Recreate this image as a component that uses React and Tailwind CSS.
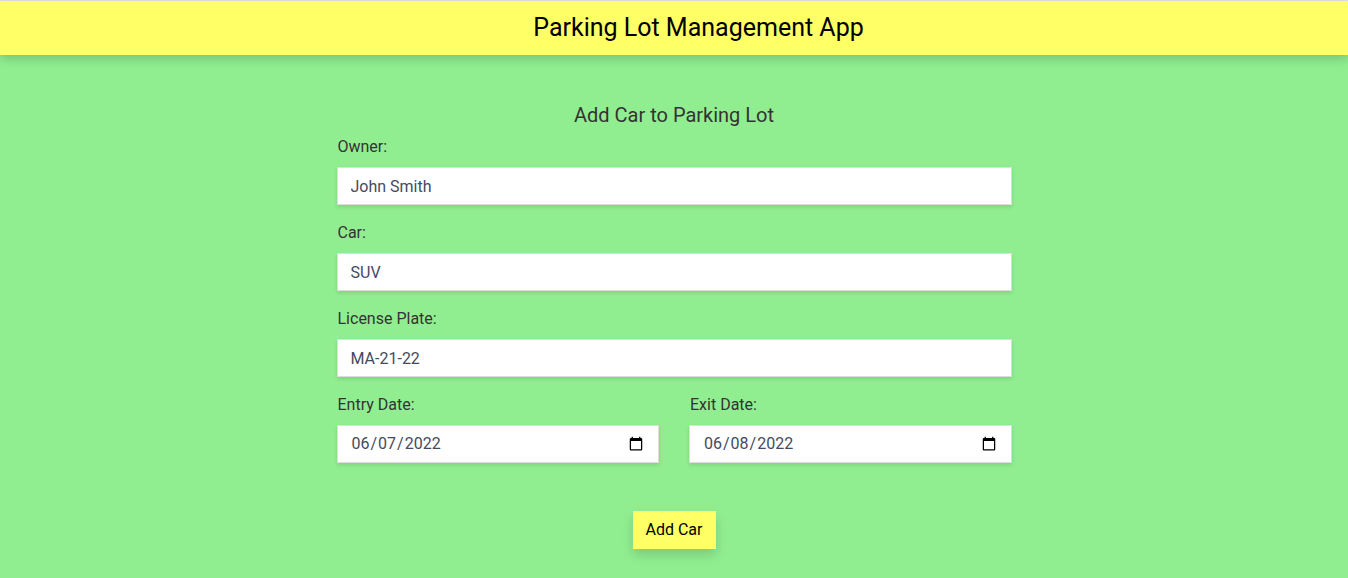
import React from "react";

function Field({ label, value, type = "text", className = "" }) {
  return (
    <div className={"flex flex-col " + className}>
      <label className="pl-[1px] text-[16px] leading-[19px] text-[#333]">{label}</label>
      <input
        type={type}
        defaultValue={value}
        className="mt-[11px] h-[38px] w-full bg-white border border-[#ddd] pl-[13px] pr-[12px] text-[16px] leading-[18px] text-[#444a5e] outline-none shadow-[0_2px_4px_rgba(0,0,0,0.12)]"
        style={{ fontFamily: "Roboto, sans-serif" }}
      />
    </div>
  );
}

export default function App() {
  return (
    <div className="min-h-[578px] bg-[#90ee90] border-t border-[#e0e0e0]" style={{ fontFamily: "Roboto, 'Noto Sans', sans-serif" }}>
      <header className="h-[54px] pl-[49px] bg-[#ffff66] flex items-center justify-center shadow-[0_4px_10px_rgba(0,0,0,0.18)] relative z-10">
        <h1 className="text-[25px] text-black">Parking Lot Management App</h1>
      </header>
      <main className="flex justify-center pt-[48px]">
        <form className="w-[675px] flex flex-col" onSubmit={(e) => e.preventDefault()}>
          <h2 className="text-[20px] leading-[24px] text-[#333] text-center mb-[10px]">Add Car to Parking Lot</h2>
          <Field label="Owner:" value="John Smith" />
          <Field label="Car:" value="SUV" className="mt-[18px]" />
          <Field label="License Plate:" value="MA-21-22" className="mt-[18px]" />
          <div className="mt-[18px] flex gap-[30px]">
            <Field label="Entry Date:" value="2022-06-07" type="date" className="flex-1" />
            <Field label="Exit Date:" value="2022-06-08" type="date" className="flex-1" />
          </div>
          <div className="flex justify-center mt-[48px]">
            <button type="submit" className="h-[38px] px-[13px] bg-[#ffff66] text-[16px] text-black shadow-[0_6px_12px_rgba(0,0,0,0.15)]">
              Add Car
            </button>
          </div>
        </form>
      </main>
    </div>
  );
}
